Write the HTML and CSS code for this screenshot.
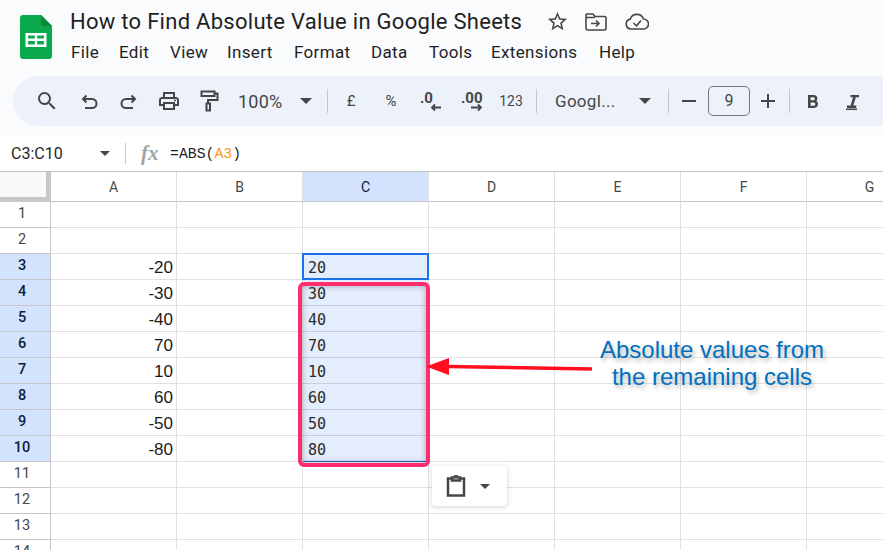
FILE: index.html
```html
<!DOCTYPE html>
<html lang="en">
<head>
<meta charset="utf-8">
<title>How to Find Absolute Value in Google Sheets</title>
<link rel="stylesheet" href="styles.css">
</head>
<body>
<div class="page">
  <header class="chrome">
    <div class="titlebar">
      <svg class="logo" viewBox="0 0 32 44" width="32" height="44">
        <path d="M3 0h18l11 11v30a3 3 0 0 1-3 3H3a3 3 0 0 1-3-3V3a3 3 0 0 1 3-3z" fill="#0ba94d"/>
        <path d="M21 0l11 11H21z" fill="#078a3c"/>
        <path d="M5.500 18h21v14h-21z M8 20.500v3h6.800v-3z M17.200 20.500v3H24v-3z M8 26v3.500h6.800V26z M17.200 26v3.500H24V26z" fill="#fff" fill-rule="evenodd"/>
      </svg>
      <div class="titles">
        <div class="title-row">
          <span class="doc-title">How to Find Absolute Value in Google Sheets</span>
          <svg class="ico star" viewBox="0 0 24 24" width="23" height="23"><path d="M22 9.240l-7.190-.62L12 2 9.190 8.630 2 9.240l5.460 4.730L5.820 21 12 17.270 18.180 21l-1.630-7.030L22 9.240zM12 15.400l-3.760 2.270 1-4.280-3.320-2.880 4.380-.38L12 6.100l1.710 4.040 4.380.38-3.320 2.880 1 4.280L12 15.400z"/></svg>
          <svg class="ico-line folder" viewBox="0 0 22 18" width="22" height="18"><path d="M1 15.500V2a1 1 0 0 1 1-1h6l2 2.500h9.500a1.500 1.500 0 0 1 1.500 1.500v10.500a1.500 1.500 0 0 1-1.500 1.500h-17A1.500 1.500 0 0 1 1 15.500z M1 4.500h9"/><path d="M6 10.500h8M11 7.500l3 3-3 3"/></svg>
          <svg class="ico-line cloud" viewBox="0 0 24 17" width="24" height="17"><path d="M6 16A5 5 0 0 1 5.300 6.100 7 7 0 0 1 18.500 6 5 5 0 0 1 18.500 16z"/><path d="M8.500 10l3 2.800 4.500-5.300"/></svg>
        </div>
        <nav class="menu">
          <span>File</span><span>Edit</span><span>View</span><span>Insert</span><span>Format</span><span>Data</span><span>Tools</span><span>Extensions</span><span>Help</span>
        </nav>
      </div>
    </div>
    <div class="toolbar">
      <span class="btn btn-search"><svg class="ico" viewBox="0 0 24 24" width="24" height="24"><path d="M15.500 14h-.79l-.28-.27A6.471 6.471 0 0 0 16 9.500 6.500 6.500 0 1 0 9.500 16c1.610 0 3.090-.59 4.230-1.570l.27.28v.79l5 4.990L20.490 19l-4.990-5zm-6 0C7.010 14 5 11.990 5 9.500S7.010 5 9.500 5 14 7.010 14 9.500 11.990 14 9.500 14z"/></svg></span>
      <span class="btn"><svg class="ico-line" viewBox="0 0 24 24" width="24" height="24"><path d="M6.500 10H15a4.500 4.500 0 0 1 0 9H8"/><path d="M9.500 6.500L6 10l3.500 3.500"/></svg></span>
      <span class="btn"><svg class="ico-line" viewBox="0 0 24 24" width="24" height="24"><path d="M17.500 10H9a4.500 4.500 0 0 0 0 9h7"/><path d="M14.500 6.500L18 10l-3.500 3.500"/></svg></span>
      <span class="btn"><svg class="ico" viewBox="0 0 24 24" width="24" height="24"><path d="M19 8h-1V3H6v5H5c-1.660 0-3 1.340-3 3v6h4v4h12v-4h4v-6c0-1.660-1.340-3-3-3zM8 5h8v3H8V5zm8 12v2H8v-4h8v2zm2-2v-2H6v2H4v-4c0-.55.45-1 1-1h14c.55 0 1 .45 1 1v4h-2z"/><circle cx="18" cy="11.500" r="1"/></svg></span>
      <span class="btn"><svg class="ico-line" viewBox="0 0 24 24" width="24" height="24"><path d="M4.500 2.500h13v4.500h-13z"/><path d="M17.500 4.500h3v6.500h-9.500v3"/><path d="M9.500 14.500h3.500v7H9.500z"/></svg></span>
      <span class="zoom-text">100%</span>
      <span class="caret caret-zoom"></span>
      <span class="sep"></span>
      <span class="btn txt">£</span>
      <span class="btn txt">%</span>
      <span class="btn"><svg class="dec" viewBox="0 0 30 26" width="30" height="26"><text x="4" y="15">.0</text><path d="M25 19.500h-9M19 16.500l-3 3 3 3"/></svg></span>
      <span class="btn"><svg class="dec" viewBox="0 0 30 26" width="30" height="26"><text x="5" y="15">.00</text><path d="M15 19.500h10M22 16.500l3 3-3 3"/></svg></span>
      <span class="btn num">123</span>
      <span class="sep sep-a"></span>
      <span class="font-name">Googl...</span>
      <span class="caret caret-font"></span>
      <span class="sep sep-b"></span>
      <span class="btn btn-minus"><svg class="ico" viewBox="0 0 24 24" width="24" height="24"><path d="M5 11h14v2H5z"/></svg></span>
      <span class="size-box">9</span>
      <span class="btn btn-plus"><svg class="ico" viewBox="0 0 24 24" width="24" height="24"><path d="M11 5h2v6h6v2h-6v6h-2v-6H5v-2h6z"/></svg></span>
      <span class="sep sep-c"></span>
      <span class="btn"><svg class="ico" viewBox="0 0 24 24" width="24" height="24"><path d="M7 6h5.800a3.600 3.600 0 0 1 2.700 6A3.900 3.900 0 0 1 13.200 19H7zm2.600 2.300v3h2.800a1.500 1.500 0 0 0 0-3zm0 5.200v3.200h3.200a1.600 1.600 0 0 0 0-3.200z"/></svg></span>
      <span class="btn"><svg class="ico" viewBox="0 0 24 24" width="24" height="24"><path d="M9.500 6h8.500v2.300h-3.100L12.300 16.500h2.900V19H6v-2.500h3.500l2.600-8.200H9.500zM5 19.500h11V21H5z"/></svg></span>
      <span class="btn"><svg class="ico" viewBox="0 0 24 24" width="24" height="24"><path d="M3 11h18v2H3z"/></svg></span>
    </div>
  </header>

  <div class="formula-bar">
    <span class="name-box">C3:C10</span>
    <span class="caret caret-name"></span>
    <span class="fx-sep"></span>
    <span class="fx">fx</span>
    <span class="formula">=ABS(<span class="ref">A3</span>)</span>
  </div>

  <div class="sheet">
    <div class="corner"></div><div class="ch">A</div><div class="ch">B</div><div class="ch ch-on">C</div><div class="ch">D</div><div class="ch">E</div><div class="ch">F</div><div class="ch">G</div>
    <div class="rh">1</div><div class="c"></div><div class="c"></div><div class="c"></div><div class="c"></div><div class="c"></div><div class="c"></div><div class="c"></div>
    <div class="rh">2</div><div class="c"></div><div class="c"></div><div class="c"></div><div class="c"></div><div class="c"></div><div class="c"></div><div class="c"></div>
    <div class="rh rh-on">3</div><div class="c n">-20</div><div class="c"></div><div class="c s active">20</div><div class="c"></div><div class="c"></div><div class="c"></div><div class="c"></div>
    <div class="rh rh-on">4</div><div class="c n">-30</div><div class="c"></div><div class="c s">30</div><div class="c"></div><div class="c"></div><div class="c"></div><div class="c"></div>
    <div class="rh rh-on">5</div><div class="c n">-40</div><div class="c"></div><div class="c s">40</div><div class="c"></div><div class="c"></div><div class="c"></div><div class="c"></div>
    <div class="rh rh-on">6</div><div class="c n">70</div><div class="c"></div><div class="c s">70</div><div class="c"></div><div class="c"></div><div class="c"></div><div class="c"></div>
    <div class="rh rh-on">7</div><div class="c n">10</div><div class="c"></div><div class="c s">10</div><div class="c"></div><div class="c"></div><div class="c"></div><div class="c"></div>
    <div class="rh rh-on">8</div><div class="c n">60</div><div class="c"></div><div class="c s">60</div><div class="c"></div><div class="c"></div><div class="c"></div><div class="c"></div>
    <div class="rh rh-on">9</div><div class="c n">-50</div><div class="c"></div><div class="c s">50</div><div class="c"></div><div class="c"></div><div class="c"></div><div class="c"></div>
    <div class="rh rh-on">10</div><div class="c n">-80</div><div class="c"></div><div class="c s last">80</div><div class="c"></div><div class="c"></div><div class="c"></div><div class="c"></div>
    <div class="rh">11</div><div class="c"></div><div class="c"></div><div class="c"></div><div class="c"></div><div class="c"></div><div class="c"></div><div class="c"></div>
    <div class="rh">12</div><div class="c"></div><div class="c"></div><div class="c"></div><div class="c"></div><div class="c"></div><div class="c"></div><div class="c"></div>
    <div class="rh">13</div><div class="c"></div><div class="c"></div><div class="c"></div><div class="c"></div><div class="c"></div><div class="c"></div><div class="c"></div>
    <div class="rh">14</div><div class="c"></div><div class="c"></div><div class="c"></div><div class="c"></div><div class="c"></div><div class="c"></div><div class="c"></div>
  </div>

  <div class="mark-box"></div>
  <svg class="arrow" viewBox="0 0 170 20" width="170" height="20">
    <path d="M22 8.500L166 11" fill="none" stroke="#ff0f1f" stroke-width="3.500"/>
    <path d="M0 8.500L23 0v17z" fill="#ff0f1f"/>
  </svg>
  <div class="note">Absolute values from<br>the remaining cells</div>
  <div class="paste">
    <svg class="ico-line clip" viewBox="0 0 20 22" width="20" height="22"><path d="M6 3.500H2v17h16v-17h-4"/><path d="M6 5.500V2.500h2.500a1.500 1.500 0 0 1 3 0H14v3z"/></svg>
    <span class="caret caret-paste"></span>
  </div>
</div>
</body>
</html>
```
FILE: styles.css
```css
* { box-sizing: border-box; }
html, body { margin: 0; padding: 0; }
body { background: #fff; font-family: Roboto, "Liberation Sans", sans-serif; color: #1f1f1f; }
.page { position: relative; width: 883px; height: 550px; overflow: hidden; }

.chrome { height: 136px; background: #f9fbfd; padding-top: 15px; }
.titlebar { display: flex; padding-left: 20px; height: 61px; }
.logo { flex: none; }
.titles { margin-left: 18px; margin-top: -9px; }
.title-row { display: flex; align-items: center; height: 31px; }
.doc-title { font-size: 22px; letter-spacing: .28px; color: #1f1f1f; white-space: nowrap; width: 476px; }
.ico { fill: #444746; flex: none; }
.ico-line { fill: none; stroke: #444746; stroke-width: 2; flex: none; }
.star { margin-left: 0; }
.folder { margin-left: 16px; stroke-width: 1.600; }
.cloud { margin-left: 18px; stroke-width: 1.600; }
.menu { display: flex; font-size: 17px; color: #1f1f1f; margin-top: 3px; height: 24px; line-height: 24px; letter-spacing: .35px; }
.menu span:nth-child(1) { width: 48px; margin-left: 1px; }
.menu span:nth-child(2) { width: 51px; }
.menu span:nth-child(3) { width: 57px; }
.menu span:nth-child(4) { width: 67px; }
.menu span:nth-child(5) { width: 77px; }
.menu span:nth-child(6) { width: 58px; }
.menu span:nth-child(7) { width: 62px; }
.menu span:nth-child(8) { width: 108px; }

.toolbar { margin-left: 13px; height: 50px; width: 900px; background: #edf2fa; border-radius: 25px 0 0 25px; padding-left: 14px; display: flex; align-items: center; color: #444746; }
.btn { width: 40px; flex: none; display: flex; justify-content: center; align-items: center; }
.btn-search { margin-right: 2px; }
.txt { font-size: 15px; }
.num { font-size: 14px; }
.zoom-text { font-size: 18px; margin-left: 9px; width: 60px; letter-spacing: .2px; }
.caret { width: 0; height: 0; flex: none; border-left: 6px solid transparent; border-right: 6px solid transparent; border-top: 6px solid #444746; }
.caret-zoom { margin-left: 2px; }
.sep { width: 1px; height: 24px; background: #c7c7c7; flex: none; margin-left: 15px; margin-right: 3px; }
.dec { fill: none; stroke: #444746; stroke-width: 1.800; }
.dec text { font-family: Roboto, sans-serif; font-size: 15px; font-weight: 700; fill: #444746; stroke: none; }
.sep-a { margin-left: 5px; margin-right: 18px; }
.font-name { font-size: 17px; width: 84px; letter-spacing: .3px; }
.caret-font { margin-left: 0; }
.sep-b { margin-left: 17px; margin-right: 0; }
.btn-minus { width: 39px; }
.btn-plus { width: 36px; }
.size-box { width: 42px; height: 30px; border: 1px solid #747775; border-radius: 5px; flex: none; text-align: center; font-size: 16px; line-height: 28px; }
.sep-c { margin-left: 3px; margin-right: 3px; }

.formula-bar { height: 36px; background: #fff; display: flex; align-items: center; border-bottom: 1px solid #c7c7c7; position: relative; }
.name-box { font-size: 16px; margin-left: 11px; width: 88px; color: #1f1f1f; }
.caret-name { border-left-width: 5px; border-right-width: 5px; border-top-width: 5px; margin-left: 1px; }
.fx-sep { width: 1px; height: 21px; background: #c7c7c7; margin-left: 15px; }
.fx { font-family: "Liberation Serif", serif; font-style: italic; font-weight: 700; font-size: 21px; color: #a0a5a5; margin-left: 15px; width: 29px; }
.formula { font-family: "Liberation Mono", monospace; font-size: 14.800px; color: #1f1f1f; }
.ref { color: #f7981d; }

.sheet { display: grid; grid-template-columns: 51px repeat(7, 126px); grid-auto-rows: 26px; grid-template-rows: 30px; }
.corner { background: #f8f9fa; border-right: 5px solid #c7c7c7; border-bottom: 5px solid #c7c7c7; }
.ch { display: flex; align-items: center; justify-content: center; font-size: 14px; color: #444746; border-right: 1px solid #e1e1e1; border-bottom: 1px solid #c7c7c7; }
.ch-on { background: #d3e3fd; color: #0b1f3a; }
.rh { display: flex; align-items: center; justify-content: center; font-size: 14.500px; color: #444746; border-right: 1px solid #c7c7c7; border-bottom: 1px solid #c7c7c7; padding-right: 6px; padding-bottom: 2px; }
.rh-on { background: #d3e3fd; color: #0b1f3a; font-weight: 500; }
.c { border-right: 1px solid #e1e1e1; border-bottom: 1px solid #e1e1e1; }
.n { font-family: "Liberation Sans", sans-serif; font-size: 17px; line-height: 27px; text-align: right; padding-right: 3px; color: #1a1a1a; }
.s { background: #e3edfc; font-family: "DejaVu Sans Mono", monospace; font-size: 15px; line-height: 29px; padding-left: 5px; border-bottom-color: #c7cedb; color: #2a2a2a; }
.active { margin: -1px 0 0 -1px; border: 2px solid #1a73e8; position: relative; padding-left: 4px; line-height: 27px; }
.last { border-bottom: 1px solid #1a5fb4; }

.mark-box { position: absolute; left: 298px; top: 282px; width: 132px; height: 185px; border: 4px solid #ff2d6d; border-radius: 6px; box-shadow: inset 0 0 6px rgba(40,40,60,.35); }
.arrow { position: absolute; left: 426px; top: 358px; }
.note { position: absolute; left: 572px; top: 336px; width: 280px; text-align: center; font-family: "Liberation Sans", sans-serif; font-size: 24px; line-height: 27px; color: #0070c0; text-shadow: 2px 3px 4px rgba(0,0,0,.3); }
.paste { position: absolute; left: 432px; top: 466px; width: 75px; height: 40px; background: #fff; border-radius: 4px; box-shadow: 0 1px 5px rgba(0,0,0,.18); display: flex; align-items: center; padding-left: 14px; }
.caret-paste { border-left-width: 5px; border-right-width: 5px; border-top-width: 5px; margin-left: 14px; border-top-color: #444746; }
.clip { stroke-width: 2.500; }
```
